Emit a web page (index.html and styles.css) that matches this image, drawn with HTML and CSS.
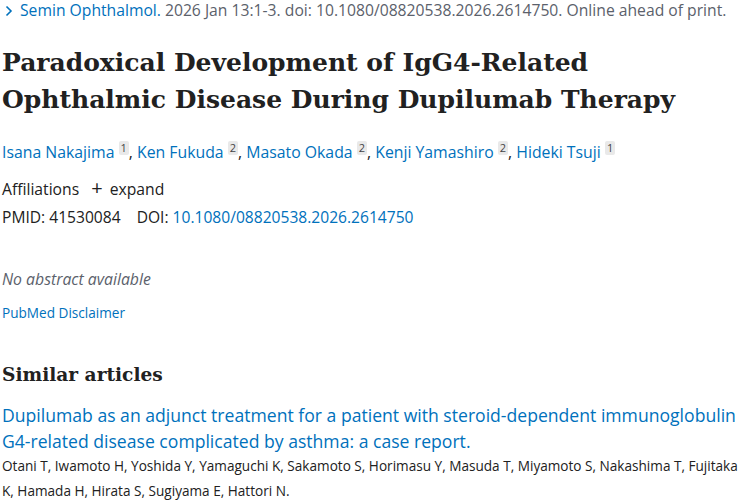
FILE: index.html
```html
<!DOCTYPE html>
<html lang="en">
<head>
    <meta charset="UTF-8">
    <title>Paradoxical Development of IgG4-Related Ophthalmic Disease During Dupilumab Therapy</title>
    <link rel="stylesheet" href="styles.css">
</head>
<body>
    <div class="article">
        <div class="cit">
            <svg class="chevron" width="10" height="12" viewBox="0 0 10 12"><path d="M2.5 1.5 L7 6 L2.5 10.5" fill="none" stroke="#0071bc" stroke-width="1.6"/></svg>
            <a href="#" class="journal">Semin Ophthalmol.</a>
            <span>2026 Jan 13:1-3. doi: 10.1080/08820538.2026.2614750. Online ahead of print.</span>
        </div>

        <h1 class="heading-title">Paradoxical Development of IgG4-Related Ophthalmic Disease During Dupilumab Therapy</h1>

        <div class="authors">
            <a href="#">Isana Nakajima</a> <sup class="aff">1</sup>,
            <a href="#">Ken Fukuda</a> <sup class="aff">2</sup>,
            <a href="#">Masato Okada</a> <sup class="aff">2</sup>,
            <a href="#">Kenji Yamashiro</a> <sup class="aff">2</sup>,
            <a href="#">Hideki Tsuji</a> <sup class="aff">1</sup>
        </div>

        <div class="affiliations">
            Affiliations <span class="expand"><span class="plus">+</span>expand</span>
        </div>

        <div class="identifiers">
            <span class="id-label">PMID:</span> 41530084
            <span class="id-label doi">DOI:</span> <a href="#">10.1080/08820538.2026.2614750</a>
        </div>

        <p class="empty-abstract">No abstract available</p>

        <a href="#" class="disclaimer">PubMed Disclaimer</a>

        <h2 class="section-title">Similar articles</h2>

        <div class="similar">
            <a href="#" class="similar-title">Dupilumab as an adjunct treatment for a patient with steroid-dependent immunoglobulin G4-related disease complicated by asthma: a case report.</a>
            <div class="similar-authors">Otani T, Iwamoto H, Yoshida Y, Yamaguchi K, Sakamoto S, Horimasu Y, Masuda T, Miyamoto S, Nakashima T, Fujitaka K, Hamada H, Hirata S, Sugiyama E, Hattori N.</div>
        </div>
    </div>
</body>
</html>
```

FILE: styles.css
```css
body {
    margin: 0;
    background: #fff;
    color: #212121;
    font-family: "Open Sans", "Noto Sans", sans-serif;
}

a {
    color: #0071bc;
    text-decoration: none;
}

.article {
    padding: 0 0 0 2px;
}

.cit {
    display: flex;
    align-items: center;
    gap: 4px;
    font-size: 15.7px;
    line-height: 21px;
    color: #5b616b;
}

.chevron {
    margin-left: 2px;
    margin-right: 2px;
}

.heading-title {
    font-family: "DejaVu Serif", serif;
    font-weight: bold;
    font-size: 25px;
    line-height: 37px;
    margin: 23px 0 22px;
    width: 680px;
    color: #212121;
}

.authors {
    font-size: 15.8px;
    line-height: 24px;
}

.aff {
    display: inline-block;
    font-size: 11px;
    line-height: 14px;
    padding: 0 2px;
    background: #e9e9e9;
    color: #444;
    vertical-align: 6px;
    border-radius: 2px;
}

.affiliations {
    font-size: 15.7px;
    line-height: 24px;
    margin-top: 12px;
}

.expand {
    margin-left: 8px;
    color: #212121;
}

.plus {
    font-size: 20px;
    margin-right: 7px;
}

.identifiers {
    font-size: 15.6px;
    line-height: 24px;
    margin-top: 4px;
}

.doi {
    margin-left: 12px;
}

.empty-abstract {
    font-style: italic;
    font-size: 15.8px;
    color: #5b616b;
    margin: 38px 0 0;
    line-height: 24px;
}

.disclaimer {
    display: block;
    font-size: 13.6px;
    line-height: 20px;
    margin-top: 12px;
}

.section-title {
    font-family: "DejaVu Serif", serif;
    font-weight: bold;
    font-size: 18.6px;
    line-height: 30px;
    margin: 37px 0 12px;
}

.similar-title {
    display: block;
    font-size: 17.6px;
    line-height: 26px;
}

.similar-authors {
    font-size: 13.6px;
    line-height: 25px;
    margin-top: -1px;
}
```
